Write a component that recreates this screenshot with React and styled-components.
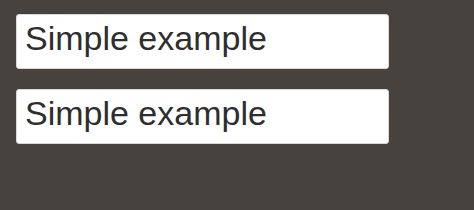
import React from "react";
import styled, { createGlobalStyle } from "styled-components";

const GlobalStyle = createGlobalStyle`
  html, body {
    margin: 0;
    padding: 0;
    background: #47423e;
  }
`;

const Page = styled.div`
  width: 474px;
  height: 210px;
  box-sizing: border-box;
  padding: 14px 0 0 16px;
  display: flex;
  flex-direction: column;
  gap: 20px;
  background: #47423e;
`;

const Field = styled.input`
  width: 373px;
  height: 55px;
  box-sizing: border-box;
  margin: 0;
  padding: 0 0 6px 8px;
  border: 1px solid #d8d8d8;
  border-radius: 3px;
  background: #ffffff;
  color: #2e2e2e;
  font-family: "Liberation Sans", Arial, sans-serif;
  font-size: 34px;
  outline: none;
`;

export default function App() {
  return (
    <>
      <GlobalStyle />
      <Page>
        <Field type="text" defaultValue="Simple example" />
        <Field type="text" defaultValue="Simple example" />
      </Page>
    </>
  );
}
